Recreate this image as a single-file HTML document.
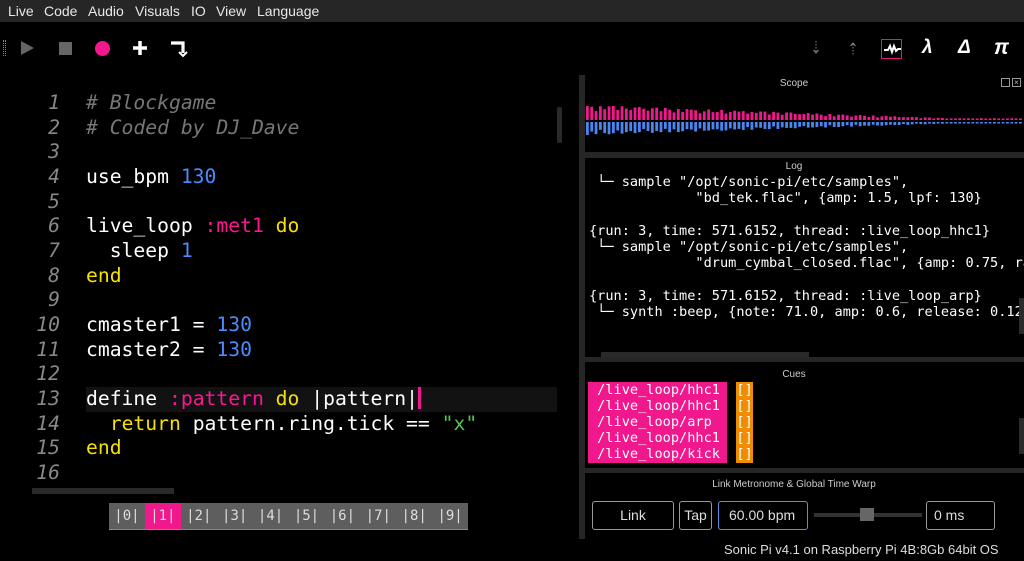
<!DOCTYPE html>
<html><head><meta charset="utf-8"><style>
*{margin:0;padding:0;box-sizing:border-box}
body{width:1024px;height:561px;background:#000;overflow:hidden;position:relative;font-family:"Liberation Sans",sans-serif;color:#ddd}
.a{position:absolute}
.menu{left:0;top:0;width:1024px;height:22px;background:#262626;font-size:14px;color:#e8e8e8}
.menu span{position:absolute;top:3px}
.mono{font-family:"DejaVu Sans Mono","Liberation Mono",monospace}
.code{left:86px;top:91px;font-size:19.7px;line-height:24.67px;white-space:pre;color:#fff}
.ln{left:20px;top:91px;width:40px;text-align:right;font-size:19.7px;line-height:24.67px;font-style:italic;color:#888;white-space:pre;font-family:"DejaVu Sans Mono",monospace}
.c{color:#777;font-style:italic}.b{color:#4a8cff}.p{color:#ff1493}.y{color:#f5e100}.g{color:#4ec94e}
.log{left:589px;top:174px;font-size:13.6px;line-height:16.3px;white-space:pre;color:#fff;width:435px;overflow:hidden}
.cue{left:589px;top:382px;font-size:13.6px;line-height:16px;white-space:pre;color:#fff}
.lbl{font-size:10px;color:#ccc;text-align:center}
.btn{border:1.5px solid #999;border-radius:3px;color:#ddd;font-size:14px;text-align:center;line-height:26px;height:29px}
</style></head><body>
<div class="a menu"><span style="left:8px">Live</span><span style="left:44px">Code</span><span style="left:88px">Audio</span><span style="left:135px">Visuals</span><span style="left:191px">IO</span><span style="left:216px">View</span><span style="left:257px">Language</span></div>
<div class="a" style="left:3px;top:40px;width:3px;height:16px;border-left:1px dotted #888;border-right:1px dotted #888"></div>
<svg class="a" style="left:18px;top:40px" width="20" height="16"><polygon points="3,1 16,8 3,15" fill="#666"/></svg>
<div class="a" style="left:59px;top:42px;width:13px;height:13px;background:#666"></div>
<div class="a" style="left:95px;top:41px;width:15px;height:15px;border-radius:50%;background:#f0188c"></div>
<svg class="a" style="left:132px;top:40px" width="16" height="16"><path d="M8 1v14M1 8h14" stroke="#fff" stroke-width="3.5"/></svg>
<svg class="a" style="left:170px;top:40px" width="18" height="18"><path d="M1 3h12v10" stroke="#fff" stroke-width="3.2" fill="none"/><path d="M9 12l4 4 4-4" stroke="#fff" stroke-width="2" fill="none"/></svg>
<svg class="a" style="left:812px;top:40px" width="8" height="16"><path d="M4 1v11" stroke="#888" stroke-width="1" stroke-dasharray="1.5 1.5"/><path d="M1.5 10l2.5 3 2.5-3" stroke="#888" fill="none"/></svg>
<svg class="a" style="left:849px;top:40px" width="8" height="16"><path d="M4 4v11" stroke="#888" stroke-width="1" stroke-dasharray="1.5 1.5"/><path d="M1.5 6l2.5-3 2.5 3" stroke="#888" fill="none"/></svg>
<div class="a" style="left:881px;top:39px;width:21px;height:20px;border:1.5px solid #e0187f"></div>
<svg class="a" style="left:883px;top:41px" width="18" height="16"><path d="M1 9h4l2-4 2 6 2-6 2 5 2-2h3" stroke="#fff" stroke-width="2" fill="none"/></svg>
<div class="a" style="left:922px;top:37px;font-size:19px;font-weight:bold;font-style:italic;color:#fff">λ</div>
<div class="a" style="left:958px;top:37px;font-size:19px;font-weight:bold;font-style:italic;color:#fff">Δ</div>
<div class="a" style="left:994px;top:36px;font-size:21px;font-weight:bold;font-style:italic;color:#fff">π</div>
<div class="a" style="left:86px;top:387px;width:471px;height:25px;background:#121212"></div>
<div class="a ln">1
2
3
4
5
6
7
8
9
10
11
12
13
14
15
16</div>
<div class="a code mono"><span class="c"># Blockgame</span>
<span class="c"># Coded by DJ_Dave</span>

use_bpm <span class="b">130</span>

live_loop <span class="p">:met1</span> <span class="y">do</span>
  sleep <span class="b">1</span>
<span class="y">end</span>

cmaster1 = <span class="b">130</span>
cmaster2 = <span class="b">130</span>

define <span class="p">:pattern</span> <span class="y">do</span> |pattern|<span style="display:inline-block;width:3px;height:22px;background:#f0188c;vertical-align:-4px"></span>
  <span class="y">return</span> pattern.ring.tick == <span class="g">"x"</span>
<span class="y">end</span>
</div>
<div class="a" style="left:557px;top:107px;width:5px;height:36px;background:#2a2a2a;border-radius:2px"></div>
<div class="a" style="left:32px;top:488px;width:142px;height:6px;background:#2a2a2a"></div>
<div class="a mono" style="left:109px;top:503px;width:359px;height:27px;background:#5e5e5e;border-bottom:1px solid #888;font-size:14px;color:#ddd;display:flex">
<span style="width:36px;text-align:center;line-height:27px">|0|</span><span style="width:36px;text-align:center;line-height:27px;background:#f0188c">|1|</span><span style="width:36px;text-align:center;line-height:27px">|2|</span><span style="width:36px;text-align:center;line-height:27px">|3|</span><span style="width:36px;text-align:center;line-height:27px">|4|</span><span style="width:36px;text-align:center;line-height:27px">|5|</span><span style="width:36px;text-align:center;line-height:27px">|6|</span><span style="width:36px;text-align:center;line-height:27px">|7|</span><span style="width:36px;text-align:center;line-height:27px">|8|</span><span style="width:36px;text-align:center;line-height:27px">|9|</span></div>
<div class="a" style="left:579px;top:75px;width:6px;height:464px;background:#262626"></div>
<div class="a" style="left:585px;top:152px;width:439px;height:6px;background:#262626"></div>
<div class="a" style="left:585px;top:357px;width:439px;height:5px;background:#262626"></div>
<div class="a" style="left:585px;top:468px;width:439px;height:5px;background:#262626"></div>
<div class="a lbl" style="left:585px;top:78px;width:418px">Scope</div>
<div class="a" style="left:1001px;top:78px;width:9px;height:9px;border:1px solid #999"></div>
<div class="a" style="left:1012px;top:78px;width:9px;height:9px;border:1px solid #999;font-size:8px;line-height:7px;text-align:center;color:#bbb">×</div>
<svg class="a" id="sc" style="left:585px;top:95px" width="439" height="50"></svg>
<div class="a lbl" style="left:585px;top:161px;width:418px">Log</div>
<div class="a log mono"> └─ sample "/opt/sonic-pi/etc/samples",
             "bd_tek.flac", {amp: 1.5, lpf: 130}

{run: 3, time: 571.6152, thread: :live_loop_hhc1}
 └─ sample "/opt/sonic-pi/etc/samples",
             "drum_cymbal_closed.flac", {amp: 0.75, rate: 1}

{run: 3, time: 571.6152, thread: :live_loop_arp}
 └─ synth :beep, {note: 71.0, amp: 0.6, release: 0.125}</div>
<div class="a" style="left:601px;top:352px;width:208px;height:5px;background:#2a2a2a"></div>
<div class="a" style="left:1019px;top:298px;width:5px;height:36px;background:#2a2a2a"></div>
<div class="a lbl" style="left:585px;top:369px;width:418px">Cues</div>
<div class="a" style="left:588px;top:382px;width:139px;height:81px;background:#f0188c"></div>
<div class="a" style="left:736px;top:382px;width:17px;height:81px;background:#f08c00"></div>
<div class="a cue mono"> /live_loop/hhc1  []
 /live_loop/hhc1  []
 /live_loop/arp   []
 /live_loop/hhc1  []
 /live_loop/kick  []</div>
<div class="a" style="left:1019px;top:418px;width:5px;height:36px;background:#2a2a2a"></div>
<div class="a lbl" style="left:585px;top:479px;width:418px">Link Metronome &amp; Global Time Warp</div>
<div class="a btn" style="left:592px;top:501px;width:82px">Link</div>
<div class="a btn" style="left:679px;top:501px;width:33px">Tap</div>
<div class="a btn" style="left:718px;top:501px;width:90px;border-color:#5a8fe0;text-align:left;padding-left:10px">60.00 bpm</div>
<div class="a" style="left:814px;top:513px;width:108px;height:4px;background:#333"></div>
<div class="a" style="left:860px;top:508px;width:14px;height:13px;background:#666"></div>
<div class="a btn" style="left:926px;top:501px;width:69px;text-align:left;padding-left:7px">0 ms</div>
<div class="a" style="left:724px;top:542px;font-size:13px;color:#ddd">Sonic Pi v4.1 on Raspberry Pi 4B:8Gb 64bit OS</div>
<script>
var s=document.getElementById('sc'),h='';
for(var i=0;i<101;i++){var x=1+i*4.33;var d=Math.max(0.12,1-i/95);var r=0.6+0.4*Math.abs(Math.sin(i*1.7+Math.cos(i*0.9)));var r2=0.6+0.4*Math.abs(Math.cos(i*1.3+Math.sin(i*0.7)));
var u=Math.max(1.5,15*d*r);var l=Math.max(1.5,13*d*r2);
h+='<rect x="'+x+'" y="'+(25-u)+'" width="2.8" height="'+u+'" fill="#f0188c"/><rect x="'+x+'" y="27" width="2.8" height="'+l+'" fill="#4a86f0"/>';}
s.innerHTML=h;
</script>
</body></html>
